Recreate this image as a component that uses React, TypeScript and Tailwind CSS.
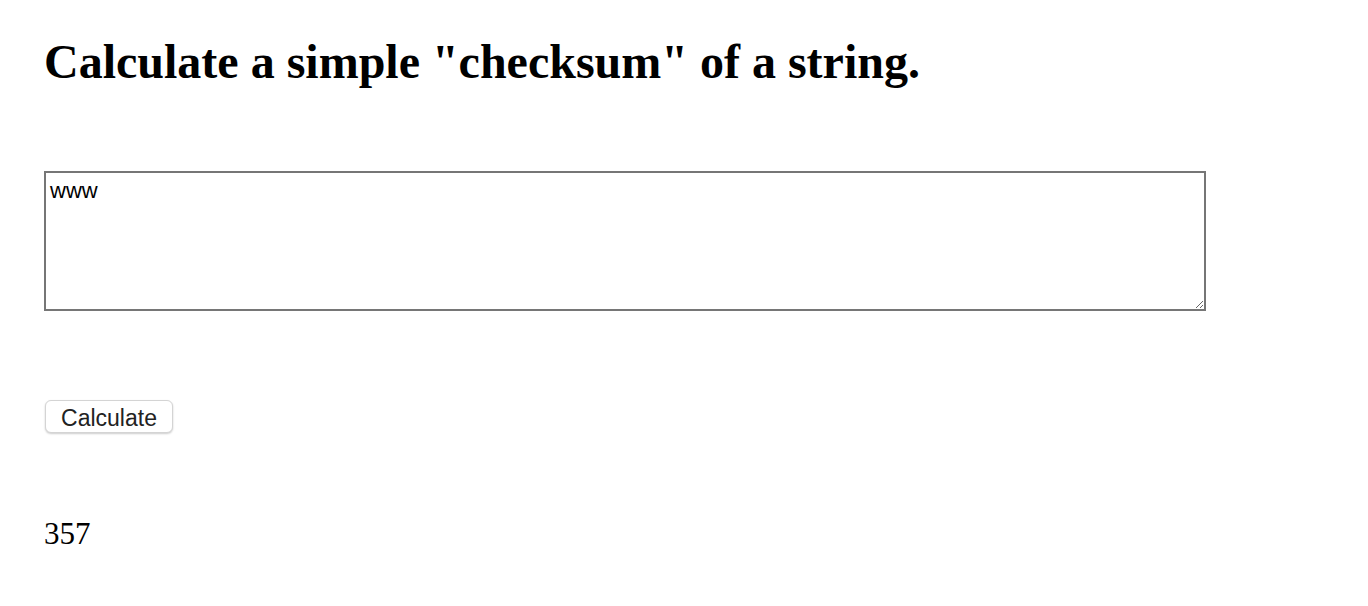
import { useState } from 'react';

function checksum(s: string) {
  let sum = 0;
  for (let i = 0; i < s.length; i++) sum += s.charCodeAt(i);
  return sum;
}

export default function App() {
  const [text, setText] = useState('www');
  const [result, setResult] = useState(checksum('www'));

  return (
    <div className="min-h-screen bg-white px-[44px] pt-[34px] text-black font-['Liberation_Serif',serif]">
      <h1 className="text-[48px] font-bold leading-[56px]">Calculate a simple "checksum" of a string.</h1>
      <textarea
        value={text}
        onChange={(e) => setText(e.target.value)}
        className="mt-[81px] block w-[1162px] h-[140px] border-2 border-[#767676] px-[4px] pt-[6px] pb-[3px] text-[22px] leading-[24px] font-['Liberation_Sans',sans-serif] outline-none"
      />
      <button
        onClick={() => setResult(checksum(text))}
        className="mt-[89px] ml-px block h-[33px] w-[128px] rounded-[6px] border border-[#d4d4d4] bg-white text-[23px] text-[#222] shadow-[0_1px_2px_rgba(0,0,0,0.2)] font-['Liberation_Sans',sans-serif]"
      >
        Calculate
      </button>
      <p className="mt-[83px] text-[31px] leading-[36px]">{result}</p>
    </div>
  );
}
